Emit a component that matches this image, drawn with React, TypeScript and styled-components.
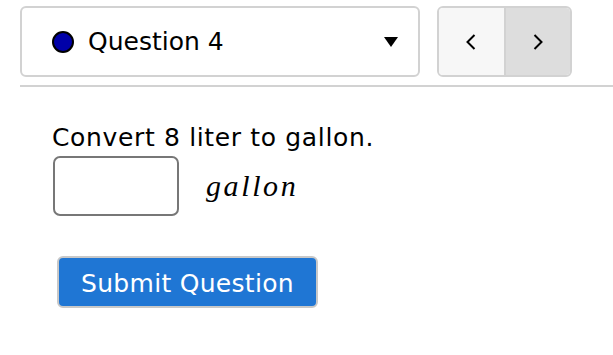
import styled, { createGlobalStyle } from "styled-components";

const GlobalStyle = createGlobalStyle`
  html, body {
    margin: 0;
    padding: 0;
    background: #fff;
  }
  body {
    font-family: "DejaVu Sans", Verdana, sans-serif;
    color: #000;
  }
`;

const App = () => {
  return (
    <Page>
      <GlobalStyle />
      <Header>
        <QuestionSelect>
          <StatusDot />
          <SelectLabel>Question 4</SelectLabel>
          <Caret viewBox="0 0 14 10">
            <path d="M0 0 L14 0 L7 10 Z" fill="#000" />
          </Caret>
        </QuestionSelect>
        <NavGroup>
          <NavButton $shade="#f7f7f7">
            <svg width="14" height="18" viewBox="0 0 14 18">
              <path d="M10.5 2 L3.5 9 L10.5 16" fill="none" stroke="#000" strokeWidth="2" />
            </svg>
          </NavButton>
          <NavButton $shade="#dddddd" $divided>
            <svg width="14" height="18" viewBox="0 0 14 18">
              <path d="M3.5 2 L10.5 9 L3.5 16" fill="none" stroke="#000" strokeWidth="2" />
            </svg>
          </NavButton>
        </NavGroup>
      </Header>
      <Divider />
      <Question>
        <Prompt>Convert 8 liter to gallon.</Prompt>
        <AnswerRow>
          <AnswerInput type="text" aria-label="answer" />
          <Unit>gallon</Unit>
        </AnswerRow>
        <SubmitButton type="button">Submit Question</SubmitButton>
      </Question>
    </Page>
  );
};

/** Styles */
const Page = styled.div`
  padding: 6px 0 0 20px;
`;

const Header = styled.div`
  display: flex;
  align-items: stretch;
  gap: 17px;
  height: 71px;
`;

const QuestionSelect = styled.div`
  box-sizing: border-box;
  width: 400px;
  display: flex;
  align-items: center;
  padding: 0 20px 0 30px;
  border: 2px solid #d2d2d2;
  border-radius: 6px;
  background: #fff;
`;

const StatusDot = styled.span`
  box-sizing: border-box;
  width: 22px;
  height: 22px;
  border-radius: 50%;
  background: #0000a8;
  border: 2px solid #000;
  flex: none;
`;

const SelectLabel = styled.span`
  margin-left: 14px;
  font-size: 25px;
  flex: 1;
`;

const Caret = styled.svg`
  width: 14px;
  height: 10px;
  flex: none;
`;

const NavGroup = styled.div`
  box-sizing: border-box;
  width: 135px;
  display: flex;
  border: 2px solid #d2d2d2;
  border-radius: 6px;
  overflow: hidden;
`;

const NavButton = styled.div<{ $shade: string; $divided?: boolean }>`
  flex: 1;
  display: flex;
  align-items: center;
  justify-content: center;
  background: ${(p) => p.$shade};
  border-left: ${(p) => (p.$divided ? "2px solid #d2d2d2" : "none")};
`;

const Divider = styled.div`
  margin-top: 8px;
  height: 2px;
  background: #d2d2d2;
`;

const Question = styled.div`
  padding: 36px 0 0 32px;
`;

const Prompt = styled.div`
  font-size: 25px;
  line-height: 30px;
  letter-spacing: 0.65px;
`;

const AnswerRow = styled.div`
  display: flex;
  align-items: center;
  margin-top: 3px;
`;

const AnswerInput = styled.input`
  box-sizing: border-box;
  width: 126px;
  height: 60px;
  margin: 0 0 0 1px;
  border: 2px solid #777;
  border-radius: 7px;
  background: #fff;
  outline: none;
`;

const Unit = styled.span`
  margin-left: 27px;
  font-family: "Liberation Serif", "Times New Roman", serif;
  font-style: italic;
  font-size: 30px;
  letter-spacing: 2.6px;
`;

const SubmitButton = styled.button`
  display: block;
  box-sizing: border-box;
  margin: 40px 0 0 5px;
  width: 261px;
  height: 52px;
  padding: 2px 0 0;
  border: 2px solid #c8c8c8;
  border-radius: 6px;
  background: #1f76d4;
  color: #fff;
  font-family: "DejaVu Sans", Verdana, sans-serif;
  font-size: 25px;
  letter-spacing: 0.3px;
`;

/** Exports */
export default App;
